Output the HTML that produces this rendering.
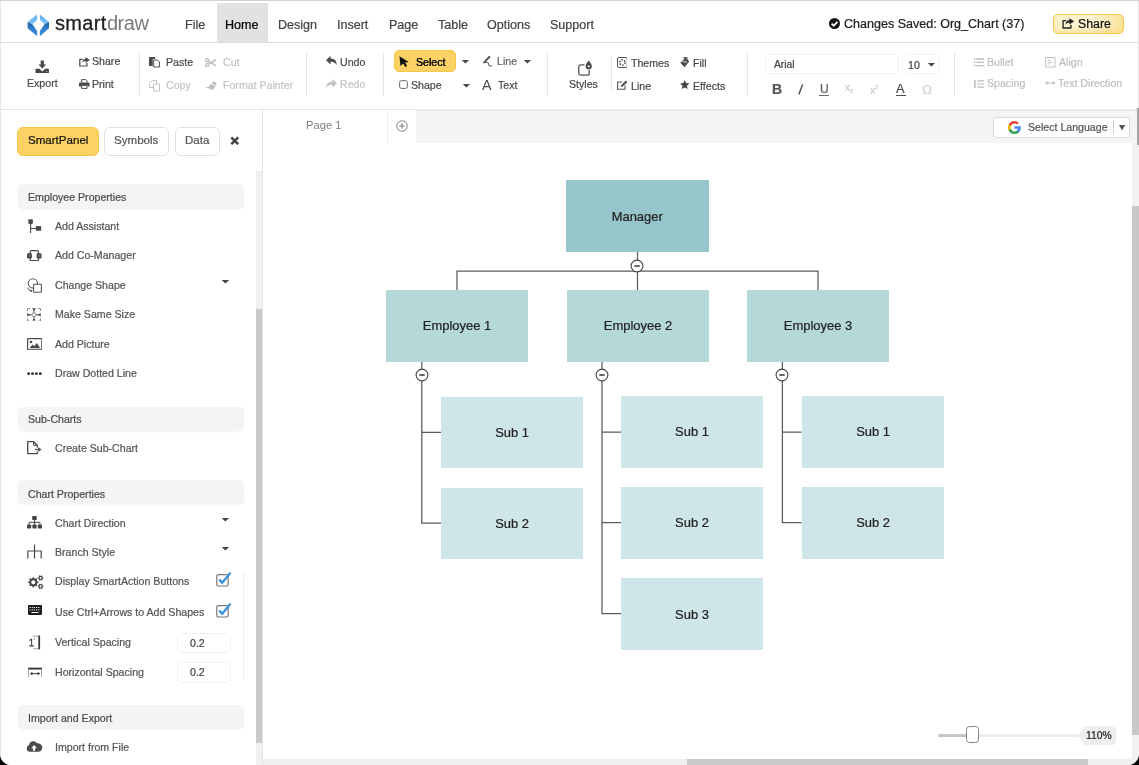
<!DOCTYPE html>
<html><head><meta charset="utf-8"><title>SmartDraw</title>
<style>
html,body{margin:0;padding:0;}
body{width:1139px;height:765px;overflow:hidden;background:#fff;position:relative;font-family:"Liberation Sans",sans-serif;}
.b{position:absolute;display:block;box-sizing:border-box;}
.t{position:absolute;white-space:nowrap;will-change:transform;-webkit-text-stroke:0.22px currentColor;}
</style></head><body>
<div class="b" style="left:0px;top:0px;width:1139px;height:765px;background:#fff;"></div>
<div class="b" style="left:0px;top:0px;width:1139px;height:1px;background:#d2d2d2;"></div>
<div class="b" style="left:0px;top:1px;width:1.2px;height:764px;background:#e6e6e6;"></div>
<div class="b" style="left:1px;top:42px;width:1138px;height:1px;background:#dcdcdc;"></div>
<div class="b" style="left:1px;top:108.8px;width:1138px;height:1.4px;background:#e3e3e3;"></div>
<div class="b" style="left:217px;top:3px;width:50.5px;height:39px;background:#e1e2e4;"></div>
<svg class="b" style="left:27px;top:13.5px;" width="23" height="23" viewBox="0 0 23 23">
<defs><linearGradient id="lgd" x1="0" y1="0" x2="0" y2="1"><stop offset="0" stop-color="#1b5a9c"/><stop offset="0.45" stop-color="#2f7dcc"/><stop offset="1" stop-color="#3f8fdd"/></linearGradient>
<linearGradient id="lgu" x1="0" y1="0" x2="0" y2="1"><stop offset="0" stop-color="#5eaef0"/><stop offset="1" stop-color="#7cc0f7"/></linearGradient></defs>
<polygon points="10.1,0.6 10.1,5.8 5.4,10.3 0.6,7.9" fill="url(#lgu)"/>
<polygon points="0.6,7.9 5.4,10.3 10.1,16.9 10.1,22.2 0.6,14.3" fill="url(#lgd)"/>
<polygon points="12.9,0.6 12.9,5.8 17.5,10.3 22,7.9" fill="url(#lgu)"/>
<polygon points="22,7.9 17.5,10.3 12.9,16.9 12.9,22.2 22,14.3" fill="url(#lgd)"/>
</svg>
<div class="t" style="left:55.3px;top:12.97px;font-size:20px;color:#222;line-height:20px;letter-spacing:0.3px;-webkit-text-stroke:0.3px #222;">smart</div>
<div class="t" style="left:107.2px;top:12.97px;font-size:20px;color:#7a7a7a;line-height:20px;letter-spacing:-0.5px;-webkit-text-stroke:0;">draw</div>
<div class="t" style="left:184.9px;top:14.75px;font-size:12.54px;color:#444;line-height:20px;">File</div>
<div class="t" style="left:224.9px;top:14.75px;font-size:12.54px;color:#000;line-height:20px;">Home</div>
<div class="t" style="left:278.0px;top:14.75px;font-size:12.54px;color:#444;line-height:20px;">Design</div>
<div class="t" style="left:336.8px;top:14.75px;font-size:12.54px;color:#444;line-height:20px;">Insert</div>
<div class="t" style="left:388.6px;top:14.75px;font-size:12.54px;color:#444;line-height:20px;">Page</div>
<div class="t" style="left:437.70000000000005px;top:14.75px;font-size:12.54px;color:#444;line-height:20px;">Table</div>
<div class="t" style="left:487.3px;top:14.75px;font-size:12.54px;color:#444;line-height:20px;">Options</div>
<div class="t" style="left:549.9px;top:14.75px;font-size:12.54px;color:#444;line-height:20px;">Support</div>
<svg class="b" style="left:829px;top:18px;" width="11" height="11" viewBox="0 0 11 11"><circle cx="5.5" cy="5.5" r="5.5" fill="#111"/><path d="M2.6 5.7 L4.7 7.7 L8.4 3.8" stroke="#fff" stroke-width="1.7" fill="none"/></svg>
<div class="t" style="left:844px;top:14.35px;font-size:12.54px;color:#222;line-height:20px;">Changes Saved: Org_Chart (37)</div>
<div class="b" style="left:1052.6px;top:14px;width:71.6px;height:19.8px;background:linear-gradient(100deg,#fdf2cb 0%,#fdf3d2 55%,#fbe39a 100%);border:1.2px solid #f7c94c;border-radius:5px;box-shadow:inset 0 -3px 4px rgba(250,215,120,0.55);"></div>
<svg class="b" style="left:1061.8px;top:17.8px;" width="12.6" height="11.6" viewBox="0 0 12 11" preserveAspectRatio="none"><path d="M8.5 6.5 V9.5 H1 V2.5 H4" stroke="#222" stroke-width="1.3" fill="none" stroke-linejoin="round"/><path d="M7 0.2 L11.5 3.2 L7 6.2 V4.3 C5 4.3 4 5.2 3.6 6.6 C3.3 3.8 4.8 2.1 7 2.1 Z" fill="#222"/></svg>
<div class="t" style="left:1077.6px;top:14.24px;font-size:12.3px;color:#111;line-height:20px;">Share</div>
<div class="b" style="left:139.0px;top:51.5px;width:1px;height:44.5px;background:#e6e6e6;"></div>
<div class="b" style="left:306.0px;top:51.5px;width:1px;height:44.5px;background:#e6e6e6;"></div>
<div class="b" style="left:382.8px;top:51.5px;width:1px;height:44.5px;background:#e6e6e6;"></div>
<div class="b" style="left:546.8px;top:51.5px;width:1px;height:44.5px;background:#e6e6e6;"></div>
<div class="b" style="left:746.8px;top:51.5px;width:1px;height:44.5px;background:#e6e6e6;"></div>
<div class="b" style="left:953.9px;top:51.5px;width:1px;height:44.5px;background:#e6e6e6;"></div>
<div class="b" style="left:610.8px;top:56px;width:1px;height:33.5px;background:#e6e6e6;"></div>
<svg class="b" style="left:35px;top:59.5px;" width="14.4" height="13.6" viewBox="0 0 14.4 13.6"><path d="M5.7 0.4 H8.9 V4.6 H11.2 L7.3 8.4 L3.4 4.6 H5.7 Z" fill="#4a4a4a"/><path d="M1.3 8.8 H4.3 L7.3 11.4 L10.3 8.8 H13.1 Q13.9 8.8 13.9 9.6 V12.4 Q13.9 13.2 13.1 13.2 H1.3 Q0.5 13.2 0.5 12.4 V9.6 Q0.5 8.8 1.3 8.8 Z" fill="#444"/><circle cx="11.6" cy="11.4" r="0.7" fill="#aaa"/></svg>
<div class="t" style="left:27.2px;top:73.23px;font-size:10.6px;color:#4a4a4a;line-height:20px;">Export</div>
<svg class="b" style="left:79px;top:56.5px;" width="11" height="10" viewBox="0 0 11 10"><path d="M8 6 V9 H0.8 V2.3 H3.6" stroke="#4a4a4a" stroke-width="1.2" fill="none" stroke-linejoin="round"/><path d="M6.5 0 L10.8 3 L6.5 6 V4.1 C4.6 4.1 3.7 5 3.3 6.3 C3 3.6 4.4 1.9 6.5 1.9 Z" fill="#4a4a4a"/></svg>
<div class="t" style="left:92px;top:51.33px;font-size:10.6px;color:#4a4a4a;line-height:20px;">Share</div>
<svg class="b" style="left:79px;top:79.2px;" width="10.6" height="10" viewBox="0 0 10.6 10"><path d="M2.6 3.4 V0.6 H6.8 L8 1.8 V3.4" fill="none" stroke="#4a4a4a" stroke-width="1"/><path d="M1.2 3.4 H9.4 Q10.6 3.4 10.6 4.6 V7.6 H8.6 V6 H2 V7.6 H0 V4.6 Q0 3.4 1.2 3.4 Z" fill="#4a4a4a"/><path d="M2.5 6.6 H8.1 V9.4 H2.5 Z" fill="#fff" stroke="#4a4a4a" stroke-width="1"/></svg>
<div class="t" style="left:92px;top:73.73px;font-size:10.6px;color:#4a4a4a;line-height:20px;">Print</div>
<svg class="b" style="left:148.6px;top:56.2px;" width="11.4" height="11.5" viewBox="0 0 12 11.5" preserveAspectRatio="none"><path d="M0 1 H6.5 V3 H4 V10 H0 Z" fill="#4a4a4a"/><path d="M5 4 H9 L11 6 V11 H5 Z" fill="#fff" stroke="#4a4a4a" stroke-width="1"/></svg>
<div class="t" style="left:165.8px;top:52.13px;font-size:10.6px;color:#4a4a4a;line-height:20px;">Paste</div>
<svg class="b" style="left:148.5px;top:80px;" width="12" height="11.5" viewBox="0 0 12 11.5"><path d="M3.5 0.5 H7.5 V7.5 H0.5 V3.5 Z" fill="none" stroke="#c4c4c4" stroke-width="1"/><path d="M4.5 4 H10.5 V11 H4.5 Z" fill="#fff" stroke="#c4c4c4" stroke-width="1"/></svg>
<div class="t" style="left:165.8px;top:75.03px;font-size:10.6px;color:#c4c4c4;line-height:20px;">Copy</div>
<svg class="b" style="left:204.8px;top:57.8px;" width="11.5" height="9.4" viewBox="0 0 11.5 9.4"><circle cx="2.1" cy="2.2" r="1.5" fill="none" stroke="#c6c6c6" stroke-width="1.5"/><circle cx="2.1" cy="7.2" r="1.5" fill="none" stroke="#c6c6c6" stroke-width="1.5"/><path d="M3.2 3.1 L11 7.8 M3.2 6.3 L11 1.6" stroke="#c6c6c6" stroke-width="1.9"/></svg>
<div class="t" style="left:222.8px;top:52.13px;font-size:10.6px;color:#c4c4c4;line-height:20px;">Cut</div>
<svg class="b" style="left:205.5px;top:80.5px;" width="11" height="9.5" viewBox="0 0 11 9.5"><path d="M0 6.6 H3" stroke="#c2c2c2" stroke-width="1"/><path d="M2.2 6.2 L5.2 2.4 L9.6 5.4 L7 8.8 L3.6 8.6 Z" fill="#c2c2c2"/><path d="M6.2 1.9 L7.6 0.3 L10.6 2.6 L9.6 4.4 Z" fill="#b4b4b4"/></svg>
<div class="t" style="left:222.8px;top:75.03px;font-size:10.6px;color:#c4c4c4;line-height:20px;">Format Painter</div>
<svg class="b" style="left:326px;top:56px;" width="11" height="10" viewBox="0 0 11 10"><path d="M4.6 0 V2.6 C8.5 2.6 10.8 4.6 10.6 9.6 C9.8 6.8 8 5.7 4.6 5.7 V8.4 L0 4.2 Z" fill="#4a4a4a"/></svg>
<div class="t" style="left:340px;top:51.73px;font-size:10.6px;color:#4a4a4a;line-height:20px;">Undo</div>
<svg class="b" style="left:326px;top:78.5px;" width="11" height="10" viewBox="0 0 11 10"><path d="M6.4 0 V2.6 C2.5 2.6 0.2 4.6 0.4 9.6 C1.2 6.8 3 5.7 6.4 5.7 V8.4 L11 4.2 Z" fill="#c4c4c4"/></svg>
<div class="t" style="left:340px;top:73.93px;font-size:10.6px;color:#c4c4c4;line-height:20px;">Redo</div>
<div class="b" style="left:394px;top:50px;width:62.3px;height:22.3px;background:#fbd263;border:1px solid #f6c64a;border-radius:5px;"></div>
<svg class="b" style="left:398.8px;top:56.1px;" width="10.6" height="11" viewBox="0 0 10 11" preserveAspectRatio="none"><path d="M0.4 0.2 L9.2 6 L5.8 6.6 L7.7 9.9 L5.9 10.9 L4.1 7.5 L1.4 9.9 Z" fill="#111"/></svg>
<div class="t" style="left:415.8px;top:52.13px;font-size:10.6px;color:#111;line-height:20px;text-shadow:0 0 0.4px #111;">Select</div>
<svg class="b" style="left:462.1px;top:60.4px;" width="7" height="4" viewBox="0 0 7 4"><path d="M0 0 H6.8 Q6.9 0.3 6.6 0.6 L3.7 3.3 Q3.4 3.5 3.1 3.3 L0.2 0.6 Q-0.1 0.3 0 0 Z" fill="#4a4a4a"/></svg>
<svg class="b" style="left:463.2px;top:84px;" width="7" height="4" viewBox="0 0 7 4"><path d="M0 0 H6.8 Q6.9 0.3 6.6 0.6 L3.7 3.3 Q3.4 3.5 3.1 3.3 L0.2 0.6 Q-0.1 0.3 0 0 Z" fill="#4a4a4a"/></svg>
<svg class="b" style="left:399px;top:80.3px;" width="9" height="9" viewBox="0 0 9 9"><rect x="0.6" y="0.6" width="7.8" height="7.8" rx="1.8" fill="none" stroke="#6a6a6a" stroke-width="1"/></svg>
<div class="t" style="left:411.4px;top:75.03px;font-size:10.6px;color:#4a4a4a;line-height:20px;">Shape</div>
<svg class="b" style="left:482.5px;top:56px;" width="10" height="11" viewBox="0 0 10 11"><path d="M6.3 1 L1.2 6.4" stroke="#555" stroke-width="2" stroke-linecap="round"/><path d="M1.2 6.4 L5.2 6.6 L6 9.9 H9" fill="none" stroke="#5a5a5a" stroke-width="1"/></svg>
<div class="t" style="left:496.8px;top:51.33px;font-size:10.6px;color:#666;line-height:20px;">Line</div>
<svg class="b" style="left:523.7px;top:60.4px;" width="7" height="4" viewBox="0 0 7 4"><path d="M0 0 H6.8 Q6.9 0.3 6.6 0.6 L3.7 3.3 Q3.4 3.5 3.1 3.3 L0.2 0.6 Q-0.1 0.3 0 0 Z" fill="#4a4a4a"/></svg>
<div class="t" style="left:481.5px;top:75.05px;font-size:14.3px;color:#4a4a4a;line-height:20px;-webkit-text-stroke:0;">A</div>
<div class="t" style="left:497.8px;top:75.03px;font-size:10.6px;color:#4a4a4a;line-height:20px;">Text</div>
<svg class="b" style="left:577.6px;top:60.2px;" width="15.5" height="16" viewBox="0 0 15.5 16"><rect x="0.8" y="4.8" width="10.4" height="10.4" rx="2" fill="none" stroke="#555" stroke-width="1.3"/><circle cx="10.7" cy="5.6" r="4.4" fill="#fff"/><path d="M10.7 0.6 C12 2.8 13.8 4.3 13.8 6.2 A3.1 3.1 0 0 1 7.6 6.2 C7.6 4.3 9.4 2.8 10.7 0.6 Z" fill="#444"/><circle cx="10.7" cy="6.3" r="1.1" fill="#fff"/></svg>
<div class="t" style="left:568.6px;top:73.63px;font-size:10.6px;color:#4a4a4a;line-height:20px;">Styles</div>
<svg class="b" style="left:616.6px;top:57px;" width="10.8" height="11" viewBox="0 0 10.8 11"><rect x="0.5" y="0.5" width="9.8" height="10" rx="1.5" fill="none" stroke="#555" stroke-width="1"/><circle cx="5.4" cy="5.5" r="2.7" fill="none" stroke="#444" stroke-width="1.5" stroke-dasharray="1.5 1.33"/></svg>
<div class="t" style="left:631.2px;top:52.53px;font-size:10.6px;color:#4a4a4a;line-height:20px;">Themes</div>
<svg class="b" style="left:680px;top:56.8px;" width="9.5" height="10.6" viewBox="0 0 9.5 10.6"><path d="M5.6 0.2 L9.2 4.6 L4.6 10.2 L0.3 5.8 L3.2 3 Z" fill="#4a4a4a"/><path d="M3.4 0.6 L7.8 1.2" stroke="#4a4a4a" stroke-width="1.2"/><path d="M2.4 4.6 L7 5.2" stroke="#fff" stroke-width="0.8"/></svg>
<div class="t" style="left:692.8px;top:52.53px;font-size:10.6px;color:#4a4a4a;line-height:20px;">Fill</div>
<svg class="b" style="left:616.5px;top:79.9px;" width="11" height="10" viewBox="0 0 11 10"><path d="M8 5.5 V9.3 H0.6 V2 H5" fill="none" stroke="#555" stroke-width="1.1"/><path d="M3.8 7 L4.3 5 L8.8 0.5 L10.4 2.1 L5.9 6.6 Z" fill="#555"/></svg>
<div class="t" style="left:631.3px;top:75.93px;font-size:10.6px;color:#4a4a4a;line-height:20px;">Line</div>
<svg class="b" style="left:679.8px;top:79.9px;" width="9.4" height="9" viewBox="0 0 10 9.5" preserveAspectRatio="none"><path d="M5 0 L6.5 3.2 L10 3.6 L7.4 6 L8.1 9.5 L5 7.8 L1.9 9.5 L2.6 6 L0 3.6 L3.5 3.2 Z" fill="#4a4a4a"/></svg>
<div class="t" style="left:692.8px;top:75.93px;font-size:10.6px;color:#4a4a4a;line-height:20px;">Effects</div>
<div class="b" style="left:765px;top:53.5px;width:134px;height:20.3px;background:#fff;border:1px solid #f4f4f4;border-radius:4px;"></div>
<div class="t" style="left:773.9px;top:54.83px;font-size:10.3px;color:#444;line-height:20px;">Arial</div>
<div class="b" style="left:901.5px;top:53.5px;width:38px;height:20.3px;background:#fff;border:1px solid #f4f4f4;border-radius:4px;"></div>
<div class="t" style="left:908px;top:54.83px;font-size:10.6px;color:#444;line-height:20px;">10</div>
<svg class="b" style="left:928px;top:62.5px;" width="7" height="4" viewBox="0 0 7 4"><path d="M0 0 H6.8 Q6.9 0.3 6.6 0.6 L3.7 3.3 Q3.4 3.5 3.1 3.3 L0.2 0.6 Q-0.1 0.3 0 0 Z" fill="#4a4a4a"/></svg>
<div class="t" style="left:771.8px;top:79.45px;font-size:14px;color:#555;line-height:20px;font-weight:bold;">B</div>
<svg class="b" style="left:797.5px;top:84px;" width="6" height="11" viewBox="0 0 6 11"><path d="M0.8 10.5 L4.6 0.5" stroke="#555" stroke-width="1.5"/></svg>
<div class="t" style="left:819.5px;top:79.24px;font-size:12px;color:#5a5a5a;line-height:20px;">U</div>
<div class="b" style="left:819.2px;top:95.2px;width:9.8px;height:1.1px;background:#6a6a6a;"></div>
<div class="t" style="left:845px;top:78.33px;font-size:10px;color:#cacaca;line-height:20px;">x<span style="font-size:5.5px;vertical-align:-1.5px">2</span></div>
<div class="t" style="left:870px;top:77.33px;font-size:10px;color:#cacaca;line-height:20px;">x<span style="font-size:5.5px;vertical-align:4.5px">2</span></div>
<div class="t" style="left:896.4px;top:78.56px;font-size:12.8px;color:#4a4a4a;line-height:20px;">A</div>
<div class="b" style="left:896.2px;top:94.9px;width:9.5px;height:1.5px;background:#4a4a4a;"></div>
<div class="t" style="left:921.5px;top:79.62px;font-size:13.5px;color:#d4d4d4;line-height:20px;">&Omega;</div>
<svg class="b" style="left:973.8px;top:58px;" width="10" height="9" viewBox="0 0 10 9"><path d="M2.4 1 H10 M2.4 4.3 H10 M2.4 7.6 H10" stroke="#bdbdbd" stroke-width="1.3"/><path d="M0 1 H1.5 M0 4.3 H1.5 M0 7.6 H1.5" stroke="#bdbdbd" stroke-width="1.5"/></svg>
<div class="t" style="left:987px;top:51.83px;font-size:10.6px;color:#bfbfbf;line-height:20px;">Bullet</div>
<svg class="b" style="left:974px;top:80px;" width="10" height="8" viewBox="0 0 10 8"><path d="M3.4 0.9 H10 M3.4 4 H10 M3.4 7.1 H10" stroke="#bdbdbd" stroke-width="1.2"/><path d="M0.9 0 V8" stroke="#b8b8b8" stroke-width="1.5"/></svg>
<div class="t" style="left:986.8px;top:73.13px;font-size:10.6px;color:#bfbfbf;line-height:20px;">Spacing</div>
<svg class="b" style="left:1045px;top:57px;" width="10.6" height="10.5" viewBox="0 0 10.6 10.5"><rect x="0.5" y="0.5" width="9.5" height="9.5" fill="none" stroke="#c4c4c4" stroke-width="1"/><path d="M2.5 3.5 H6 M2.5 5.3 H7.5 M2.5 7 H5.5" stroke="#c4c4c4" stroke-width="0.9"/></svg>
<div class="t" style="left:1058.5px;top:51.93px;font-size:10.6px;color:#bfbfbf;line-height:20px;">Align</div>
<svg class="b" style="left:1045px;top:80.3px;" width="10.6" height="6" viewBox="0 0 10.6 6"><path d="M1.5 3 H9" stroke="#bdbdbd" stroke-width="1.1"/><path d="M0 3 L2.5 1 V5 Z M10.5 3 L8 1 V5 Z" fill="#bdbdbd"/></svg>
<div class="t" style="left:1058.4px;top:73.23px;font-size:10.6px;color:#bfbfbf;line-height:20px;">Text Direction</div>
<div class="b" style="left:261.6px;top:110px;width:1.5px;height:655px;background:#e6e6e6;"></div>
<div class="b" style="left:255.5px;top:171px;width:6.5px;height:594px;background:#f0f0f0;"></div>
<div class="b" style="left:255.5px;top:308.5px;width:6.5px;height:434.5px;background:#c9c9c9;"></div>
<div class="b" style="left:17px;top:126.5px;width:81.5px;height:29.3px;background:#fbd263;border:1px solid #f6c64a;border-radius:6px;"></div>
<div class="t" style="left:27.7px;top:129.89px;font-size:11.57px;color:#111;line-height:20px;">SmartPanel</div>
<div class="b" style="left:104.3px;top:126.5px;width:64.5px;height:29.3px;background:#fff;border:1px solid #e0e0e0;border-radius:6px;"></div>
<div class="t" style="left:113.6px;top:129.89px;font-size:11.57px;color:#555;line-height:20px;">Symbols</div>
<div class="b" style="left:174.9px;top:126.5px;width:45.6px;height:29.3px;background:#fff;border:1px solid #e0e0e0;border-radius:6px;"></div>
<div class="t" style="left:185.3px;top:129.89px;font-size:11.57px;color:#555;line-height:20px;">Data</div>
<svg class="b" style="left:230px;top:135.9px;" width="9.5" height="9.5" viewBox="0 0 9.5 9.5"><path d="M1.3 1.3 L8.2 8.2 M8.2 1.3 L1.3 8.2" stroke="#444" stroke-width="2.5"/></svg>
<div class="b" style="left:17.5px;top:184px;width:226.3px;height:24.8px;background:#f3f4f6;border-radius:5px;box-shadow:0 1px 2px rgba(0,0,0,0.035);"></div>
<div class="t" style="left:27.6px;top:186.83px;font-size:10.6px;color:#4a4a4a;line-height:20px;">Employee Properties</div>
<div class="b" style="left:17.5px;top:406.6px;width:226.3px;height:24.7px;background:#f3f4f6;border-radius:5px;box-shadow:0 1px 2px rgba(0,0,0,0.035);"></div>
<div class="t" style="left:27.6px;top:409.33px;font-size:10.6px;color:#4a4a4a;line-height:20px;">Sub-Charts</div>
<div class="b" style="left:17.5px;top:480.1px;width:226.3px;height:24.3px;background:#f3f4f6;border-radius:5px;box-shadow:0 1px 2px rgba(0,0,0,0.035);"></div>
<div class="t" style="left:27.6px;top:483.53px;font-size:10.6px;color:#4a4a4a;line-height:20px;">Chart Properties</div>
<div class="b" style="left:17.5px;top:704.6px;width:226.3px;height:24.8px;background:#f3f4f6;border-radius:5px;box-shadow:0 1px 2px rgba(0,0,0,0.035);"></div>
<div class="t" style="left:27.6px;top:707.83px;font-size:10.6px;color:#4a4a4a;line-height:20px;">Import and Export</div>
<div class="t" style="left:54.6px;top:215.73px;font-size:10.6px;color:#555;line-height:20px;">Add Assistant</div>
<div class="t" style="left:54.6px;top:245.33px;font-size:10.6px;color:#555;line-height:20px;">Add Co-Manager</div>
<div class="t" style="left:54.6px;top:274.73px;font-size:10.6px;color:#555;line-height:20px;">Change Shape</div>
<div class="t" style="left:54.6px;top:304.43px;font-size:10.6px;color:#555;line-height:20px;">Make Same Size</div>
<div class="t" style="left:54.6px;top:334.03px;font-size:10.6px;color:#555;line-height:20px;">Add Picture</div>
<div class="t" style="left:54.6px;top:363.23px;font-size:10.6px;color:#555;line-height:20px;">Draw Dotted Line</div>
<div class="t" style="left:54.6px;top:437.73px;font-size:10.6px;color:#555;line-height:20px;">Create Sub-Chart</div>
<div class="t" style="left:54.6px;top:512.63px;font-size:10.6px;color:#555;line-height:20px;">Chart Direction</div>
<div class="t" style="left:54.6px;top:542.03px;font-size:10.6px;color:#555;line-height:20px;">Branch Style</div>
<div class="t" style="left:54.6px;top:601.73px;font-size:10.6px;color:#555;line-height:20px;">Use Ctrl+Arrows to Add Shapes</div>
<div class="t" style="left:54.6px;top:632.33px;font-size:10.6px;color:#555;line-height:20px;">Vertical Spacing</div>
<div class="t" style="left:54.6px;top:662.13px;font-size:10.6px;color:#555;line-height:20px;">Horizontal Spacing</div>
<div class="t" style="left:54.6px;top:737.13px;font-size:10.6px;color:#555;line-height:20px;">Import from File</div>
<div class="t" style="left:55.2px;top:571.33px;font-size:10.6px;color:#555;line-height:20px;">Display SmartAction Buttons</div>
<svg class="b" style="left:221.5px;top:280.2px;" width="7" height="4" viewBox="0 0 7 4"><path d="M0 0 H6.8 Q6.9 0.3 6.6 0.6 L3.7 3.3 Q3.4 3.5 3.1 3.3 L0.2 0.6 Q-0.1 0.3 0 0 Z" fill="#444"/></svg>
<svg class="b" style="left:221.5px;top:517.8px;" width="7" height="4" viewBox="0 0 7 4"><path d="M0 0 H6.8 Q6.9 0.3 6.6 0.6 L3.7 3.3 Q3.4 3.5 3.1 3.3 L0.2 0.6 Q-0.1 0.3 0 0 Z" fill="#444"/></svg>
<svg class="b" style="left:221.5px;top:547.2px;" width="7" height="4" viewBox="0 0 7 4"><path d="M0 0 H6.8 Q6.9 0.3 6.6 0.6 L3.7 3.3 Q3.4 3.5 3.1 3.3 L0.2 0.6 Q-0.1 0.3 0 0 Z" fill="#444"/></svg>
<svg class="b" style="left:216px;top:571.4px;" width="16" height="16" viewBox="0 0 16 16"><rect x="0.8" y="3.6" width="11.4" height="11.4" rx="1.5" fill="#fff" stroke="#777" stroke-width="1.2"/><path d="M3.2 8.5 L6.2 11.8 L14.6 1.6" fill="none" stroke="#2f8fdd" stroke-width="2.2"/></svg>
<svg class="b" style="left:216px;top:601.5px;" width="16" height="16" viewBox="0 0 16 16"><rect x="0.8" y="3.6" width="11.4" height="11.4" rx="1.5" fill="#fff" stroke="#777" stroke-width="1.2"/><path d="M3.2 8.5 L6.2 11.8 L14.6 1.6" fill="none" stroke="#2f8fdd" stroke-width="2.2"/></svg>
<div class="b" style="left:176.6px;top:632.9px;width:54.5px;height:20.6px;background:#fff;border:1px solid #f0f0f0;border-radius:5px;"></div>
<div class="t" style="left:190.1px;top:632.63px;font-size:10.6px;color:#444;line-height:20px;">0.2</div>
<div class="b" style="left:176.6px;top:662px;width:54.5px;height:20.6px;background:#fff;border:1px solid #f0f0f0;border-radius:5px;"></div>
<div class="t" style="left:190.1px;top:662.23px;font-size:10.6px;color:#444;line-height:20px;">0.2</div>
<div class="b" style="left:242.7px;top:573px;width:1px;height:106px;background:#ececec;"></div>
<svg class="b" style="left:28px;top:218.5px;" width="14" height="14.5" viewBox="0 0 14 14.5"><rect x="0.3" y="0.3" width="4.6" height="4.6" rx="0.8" fill="#4a4a4a"/><path d="M2.6 4.5 V14 M2.6 9.5 H8" stroke="#4a4a4a" stroke-width="1.1" fill="none"/><rect x="7.8" y="7" width="5.4" height="4.8" rx="0.9" fill="#4a4a4a"/></svg>
<svg class="b" style="left:27px;top:249.5px;" width="14.5" height="11.57" viewBox="0 0 14.5 11.57"><rect x="3.2" y="0.7" width="8.3" height="10" rx="1.2" fill="none" stroke="#4a4a4a" stroke-width="1.2"/><rect x="0" y="3.3" width="4.9" height="5.2" rx="1.2" fill="#4a4a4a"/><rect x="9.6" y="3.3" width="4.9" height="5.2" rx="1.2" fill="#4a4a4a"/><circle cx="2.6" cy="5.9" r="0.8" fill="#888"/><circle cx="12" cy="5.9" r="0.8" fill="#888"/></svg>
<svg class="b" style="left:27px;top:277.5px;" width="15" height="15" viewBox="0 0 15 15"><circle cx="5.9" cy="5.4" r="4.6" fill="none" stroke="#555" stroke-width="1.1"/><rect x="6.6" y="6.2" width="7.8" height="8" rx="0.4" fill="#fff" stroke="#555" stroke-width="1.1"/><path d="M0.8 9.6 C1.2 11.8 2.6 12.9 5 12.8" fill="none" stroke="#555" stroke-width="1"/><path d="M3.6 11.2 L5.6 12.8 L3.6 14.4 Z" fill="#444"/></svg>
<svg class="b" style="left:27.4px;top:307.8px;" width="14" height="13.6" viewBox="0 0 14 13.6"><path d="M0.5 3 V0.5 H3 M11 0.5 H13.5 V3 M13.5 10.6 V13.1 H11 M3 13.1 H0.5 V10.6 M0.5 5 V8.6 M13.5 5 V8.6 M5 0.5 H9 M5 13.1 H9" fill="none" stroke="#8a8a8a" stroke-width="1"/><path d="M7 1.6 V12 M1.6 6.8 H12.4" stroke="#555" stroke-width="1"/><circle cx="7" cy="1.8" r="1" fill="#444"/><circle cx="7" cy="11.8" r="1" fill="#444"/><circle cx="1.8" cy="6.8" r="1" fill="#444"/><circle cx="12.2" cy="6.8" r="1" fill="#444"/><circle cx="7" cy="6.8" r="1.9" fill="#fff" stroke="#777" stroke-width="0.8"/></svg>
<svg class="b" style="left:26.7px;top:337.5px;" width="15.5" height="12.5" viewBox="0 0 15.5 12.5"><rect x="0.6" y="0.6" width="14.3" height="11.3" rx="0.8" fill="none" stroke="#4a4a4a" stroke-width="1.2"/><circle cx="4" cy="4" r="1.3" fill="#4a4a4a"/><path d="M2.3 10.2 L5.5 6.4 L7.3 8.2 L9.8 5 L13.3 10.2 Z" fill="#4a4a4a"/></svg>
<svg class="b" style="left:27px;top:371.8px;" width="15" height="3.2" viewBox="0 0 15 3.2"><circle cx="1.6" cy="1.6" r="1.45" fill="#333"/><circle cx="5.5" cy="1.6" r="1.45" fill="#333"/><circle cx="9.4" cy="1.6" r="1.45" fill="#333"/><circle cx="13.3" cy="1.6" r="1.45" fill="#333"/></svg>
<svg class="b" style="left:27.3px;top:441px;" width="15" height="14" viewBox="0 0 15 14"><path d="M10.3 10.6 V12.6 H0.7 V0.7 H6.6 L10.3 4.3 V6.4" fill="none" stroke="#4a4a4a" stroke-width="1.3" stroke-linejoin="round"/><path d="M6.6 0.9 V4.3 H10.2" fill="none" stroke="#4a4a4a" stroke-width="1"/><path d="M8 8.5 H12" stroke="#4a4a4a" stroke-width="1.3"/><path d="M11.3 6.1 L14.5 8.5 L11.3 10.9 Z" fill="#4a4a4a"/></svg>
<svg class="b" style="left:27.3px;top:516px;" width="15" height="12.5" viewBox="0 0 15 12.5"><rect x="5.2" y="0" width="4.6" height="4" rx="0.7" fill="#444"/><rect x="0" y="8.5" width="4.2" height="4" rx="0.7" fill="#444"/><rect x="5.4" y="8.5" width="4.2" height="4" rx="0.7" fill="#444"/><rect x="10.8" y="8.5" width="4.2" height="4" rx="0.7" fill="#444"/><path d="M7.5 4 V8.5 M2.1 8.5 V6.3 H12.9 V8.5" fill="none" stroke="#444" stroke-width="1"/></svg>
<svg class="b" style="left:27.3px;top:544px;" width="15" height="15" viewBox="0 0 15 15"><path d="M7.5 0.5 V14.5 M0.8 14.5 V7 H14.2 V14.5" fill="none" stroke="#4a4a4a" stroke-width="1.2"/></svg>
<svg class="b" style="left:27.5px;top:574.5px;" width="16" height="15" viewBox="0 0 16 15"><path d="M10.47 6.79 L10.47 7.81 L9.03 8.43 L8.74 9.14 L9.32 10.60 L8.60 11.32 L7.14 10.74 L6.43 11.03 L5.81 12.47 L4.79 12.47 L4.17 11.03 L3.46 10.74 L2.00 11.32 L1.28 10.60 L1.86 9.14 L1.57 8.43 L0.13 7.81 L0.13 6.79 L1.57 6.17 L1.86 5.46 L1.28 4.00 L2.00 3.28 L3.46 3.86 L4.17 3.57 L4.79 2.13 L5.81 2.13 L6.43 3.57 L7.14 3.86 L8.60 3.28 L9.32 4.00 L8.74 5.46 L9.03 6.17 Z M7.40 7.30 A2.1 2.1 0 1 0 3.20 7.30 A2.1 2.1 0 1 0 7.40 7.30 Z" fill="#444" fill-rule="evenodd"/><path d="M15.48 2.62 L15.48 3.38 L14.54 3.80 L14.27 4.28 L14.37 5.30 L13.71 5.68 L12.87 5.08 L12.33 5.08 L11.49 5.68 L10.83 5.30 L10.93 4.28 L10.66 3.80 L9.72 3.38 L9.72 2.62 L10.66 2.20 L10.93 1.72 L10.83 0.70 L11.49 0.32 L12.33 0.92 L12.87 0.92 L13.71 0.32 L14.37 0.70 L14.27 1.72 L14.54 2.20 Z M13.65 3.00 A1.05 1.05 0 1 0 11.55 3.00 A1.05 1.05 0 1 0 13.65 3.00 Z" fill="#444" fill-rule="evenodd"/><path d="M15.48 11.02 L15.48 11.78 L14.54 12.20 L14.27 12.68 L14.37 13.70 L13.71 14.08 L12.87 13.48 L12.33 13.48 L11.49 14.08 L10.83 13.70 L10.93 12.68 L10.66 12.20 L9.72 11.78 L9.72 11.02 L10.66 10.60 L10.93 10.12 L10.83 9.10 L11.49 8.72 L12.33 9.32 L12.87 9.32 L13.71 8.72 L14.37 9.10 L14.27 10.12 L14.54 10.60 Z M13.65 11.40 A1.05 1.05 0 1 0 11.55 11.40 A1.05 1.05 0 1 0 13.65 11.40 Z" fill="#444" fill-rule="evenodd"/></svg>
<svg class="b" style="left:28px;top:605.3px;" width="14" height="10" viewBox="0 0 14 10"><rect x="0" y="0" width="14" height="10" rx="1" fill="#1e1e1e"/><path d="M1.6 2.5 H12.4 M1.6 4.9 H12.4" stroke="#fff" stroke-width="1" stroke-dasharray="1.2 0.95"/><path d="M3.4 7.5 H10.6" stroke="#fff" stroke-width="1"/></svg>
<svg class="b" style="left:28px;top:635px;" width="14" height="15" viewBox="0 0 14 15"><path d="M5 1.2 H11.5 M5 13.8 H11.5" stroke="#999" stroke-width="0.9"/><path d="M11.2 0.6 V14.2" stroke="#3a3a3a" stroke-width="1.8"/><path d="M1.4 5.4 L3.6 4.2 V10.9 M1.3 10.9 H5.8" fill="none" stroke="#444" stroke-width="1.1"/><circle cx="6.3" cy="4" r="0.6" fill="#555"/></svg>
<svg class="b" style="left:28px;top:667px;" width="14" height="10.6" viewBox="0 0 14 10.6"><path d="M0 1.6 H14" stroke="#3a3a3a" stroke-width="1.9"/><path d="M0.5 2 V10 M13.5 2 V10" stroke="#999" stroke-width="0.9"/><path d="M3.5 6.6 H10.5" stroke="#444" stroke-width="1.1"/><path d="M1.8 6.6 L4.4 4.8 V8.4 Z M12.2 6.6 L9.6 4.8 V8.4 Z" fill="#444"/></svg>
<svg class="b" style="left:26.4px;top:740.4px;" width="16.2" height="12" viewBox="0 0 15.5 11.6" preserveAspectRatio="none"><path d="M3.7 11.4 A3.4 3.4 0 0 1 3 4.8 A4.1 4.1 0 0 1 10.6 3.2 A3.6 3.6 0 0 1 12.2 11.4 Z" fill="#4a4a4a"/><path d="M7.7 4.9 L10.5 8 H8.7 V10.3 H6.7 V8 H4.9 Z" fill="#fff"/></svg>
<div class="b" style="left:416px;top:110.2px;width:721px;height:32.6px;background:#f3f4f6;"></div>
<div class="b" style="left:416px;top:108.5px;width:721px;height:2.6px;background:#e9e9e9;"></div>
<div class="b" style="left:387px;top:110.5px;width:1px;height:32.5px;background:#ebebeb;"></div>
<div class="t" style="left:306.2px;top:114.72px;font-size:11.2px;color:#808080;line-height:20px;-webkit-text-stroke:0;">Page 1</div>
<svg class="b" style="left:395.5px;top:120px;" width="12" height="12" viewBox="0 0 12 12"><circle cx="6" cy="6" r="5.2" fill="none" stroke="#777" stroke-width="0.9"/><path d="M3.3 6 H8.7 M6 3.3 V8.7" stroke="#777" stroke-width="1"/></svg>
<div class="b" style="left:992.6px;top:116.9px;width:137px;height:20.7px;background:#fff;border:1px solid #d8d8d8;border-radius:4px;"></div>
<svg class="b" style="left:1008px;top:121px;" width="13" height="13" viewBox="0 0 13 13"><path d="M12.7 6.65c0-.45-.04-.88-.11-1.3H6.5v2.46h3.48a2.97 2.97 0 0 1-1.29 1.95v1.62h2.09c1.22-1.13 1.92-2.78 1.92-4.73z" fill="#4285f4"/>
<path d="M6.5 13c1.75 0 3.22-.58 4.29-1.57L8.7 9.81c-.58.39-1.32.62-2.2.62-1.69 0-3.12-1.14-3.63-2.68H.71v1.67A6.5 6.5 0 0 0 6.5 13z" fill="#34a853"/>
<path d="M2.87 7.75a3.9 3.9 0 0 1 0-2.5V3.58H.71a6.5 6.5 0 0 0 0 5.84l2.16-1.67z" fill="#fbbc05"/>
<path d="M6.5 2.57c.95 0 1.81.33 2.48.97l1.86-1.86A6.23 6.23 0 0 0 6.5 0 6.5 6.5 0 0 0 .71 3.58l2.16 1.67C3.38 3.71 4.81 2.57 6.5 2.57z" fill="#ea4335"/></svg>
<div class="t" style="left:1028.4px;top:117.33px;font-size:10.6px;color:#555;line-height:20px;">Select Language</div>
<div class="b" style="left:1112.7px;top:121px;width:1px;height:13px;background:#cfcfcf;"></div>
<svg class="b" style="left:1119px;top:125.4px;" width="6.2" height="5.4" viewBox="0 0 6.2 5.4"><path d="M0 0 H6.2 L3.1 5.4 Z" fill="#555"/></svg>
<div class="b" style="left:1132px;top:143px;width:7px;height:615.5px;background:#f2f2f2;"></div>
<div class="b" style="left:1132px;top:206px;width:7px;height:529px;background:#c8c8c8;"></div>
<div class="b" style="left:1137.2px;top:107.5px;width:1.8px;height:37px;background:#a2a2a2;"></div>
<div class="b" style="left:1137.5px;top:1px;width:1.5px;height:107px;background:#e6e6e6;"></div>
<div class="b" style="left:263px;top:758.5px;width:869px;height:6.5px;background:#efefef;"></div>
<div class="b" style="left:687px;top:758.5px;width:400.5px;height:6.5px;background:#c9c9c9;"></div>
<div class="b" style="left:1132px;top:758.5px;width:7px;height:6.5px;background:#f4f4f4;border-radius:0 0 9px 0;"></div>
<div class="b" style="left:937.5px;top:733.5px;width:141px;height:3.4px;background:#ececec;border-radius:1.7px;"></div>
<div class="b" style="left:937.5px;top:733.5px;width:30px;height:3.4px;background:#c6c6c6;border-radius:1.7px;"></div>
<div class="b" style="left:965.5px;top:726.3px;width:13.2px;height:16.6px;background:#fff;border:1.4px solid #828282;border-radius:3.5px;"></div>
<svg class="b" style="left:1078px;top:725.5px;" width="38.5" height="19.5" viewBox="0 0 38.5 19.5"><path d="M0.3 9.7 Q0.3 9 1 8 L4 3 Q6 0 9.5 0 H32 Q38.5 0 38.5 6.5 V13 Q38.5 19.5 32 19.5 H9.5 Q6 19.5 4 16.5 L1 11.4 Q0.3 10.4 0.3 9.7 Z" fill="#eeeeee"/></svg>
<div class="t" style="left:1086.3px;top:725.63px;font-size:10.3px;color:#222;line-height:20px;">110%</div>
<svg class="b" style="left:0px;top:0px;" width="1139" height="765" viewBox="0 0 1139 765"><g fill="none" stroke="#5a5a5a" stroke-width="1.25">
<path d="M637.5 252 V290 M457 290 V271 H818 V290" />
<path d="M421.8 362 V523 H441 M421.8 432.4 H441" />
<path d="M602 362 V613.5 H621 M602 432 H621 M602 522.6 H621" />
<path d="M782.4 362 V522.6 H801.5 M782.4 432 H801.5" />
</g></svg>
<div class="b" style="left:566.3px;top:180.3px;width:142.4px;height:71.9px;background:#96c5cc;"></div>
<div class="t" style="left:566.3px;top:206.76px;font-size:12.95px;color:#222;line-height:20px;width:142.4px;text-align:center;">Manager</div>
<div class="b" style="left:386.3px;top:289.8px;width:142px;height:71.8px;background:#b5d8d9;"></div>
<div class="t" style="left:386.3px;top:316.21px;font-size:12.95px;color:#222;line-height:20px;width:142px;text-align:center;">Employee 1</div>
<div class="b" style="left:566.5px;top:289.8px;width:142px;height:71.8px;background:#b5d8d9;"></div>
<div class="t" style="left:566.5px;top:316.21px;font-size:12.95px;color:#222;line-height:20px;width:142px;text-align:center;">Employee 2</div>
<div class="b" style="left:746.8px;top:289.8px;width:142px;height:71.8px;background:#b5d8d9;"></div>
<div class="t" style="left:746.8px;top:316.21px;font-size:12.95px;color:#222;line-height:20px;width:142px;text-align:center;">Employee 3</div>
<div class="b" style="left:440.6px;top:396.6px;width:142.2px;height:71.7px;background:#cfe6e9;"></div>
<div class="t" style="left:440.6px;top:422.96px;font-size:12.95px;color:#222;line-height:20px;width:142.2px;text-align:center;">Sub 1</div>
<div class="b" style="left:440.6px;top:487.7px;width:142.2px;height:71.7px;background:#cfe6e9;"></div>
<div class="t" style="left:440.6px;top:514.06px;font-size:12.95px;color:#222;line-height:20px;width:142.2px;text-align:center;">Sub 2</div>
<div class="b" style="left:621.2px;top:396.1px;width:142px;height:71.5px;background:#cfe6e9;"></div>
<div class="t" style="left:621.2px;top:422.36px;font-size:12.95px;color:#222;line-height:20px;width:142px;text-align:center;">Sub 1</div>
<div class="b" style="left:621.2px;top:487px;width:142px;height:71.8px;background:#cfe6e9;"></div>
<div class="t" style="left:621.2px;top:513.41px;font-size:12.95px;color:#222;line-height:20px;width:142px;text-align:center;">Sub 2</div>
<div class="b" style="left:621.2px;top:578.4px;width:142px;height:71.5px;background:#cfe6e9;"></div>
<div class="t" style="left:621.2px;top:604.66px;font-size:12.95px;color:#222;line-height:20px;width:142px;text-align:center;">Sub 3</div>
<div class="b" style="left:801.6px;top:396.1px;width:142.3px;height:71.5px;background:#cfe6e9;"></div>
<div class="t" style="left:801.6px;top:422.36px;font-size:12.95px;color:#222;line-height:20px;width:142.3px;text-align:center;">Sub 1</div>
<div class="b" style="left:801.6px;top:487px;width:142.3px;height:71.8px;background:#cfe6e9;"></div>
<div class="t" style="left:801.6px;top:513.41px;font-size:12.95px;color:#222;line-height:20px;width:142.3px;text-align:center;">Sub 2</div>
<svg class="b" style="left:630.4px;top:258.6px;" width="14" height="14" viewBox="0 0 14 14"><circle cx="7" cy="7" r="5.9" fill="#fff" stroke="#444" stroke-width="1.1"/><path d="M4.3 7 H9.7" stroke="#333" stroke-width="1.5"/></svg>
<svg class="b" style="left:414.8px;top:367.8px;" width="14" height="14" viewBox="0 0 14 14"><circle cx="7" cy="7" r="5.9" fill="#fff" stroke="#444" stroke-width="1.1"/><path d="M4.3 7 H9.7" stroke="#333" stroke-width="1.5"/></svg>
<svg class="b" style="left:595px;top:367.8px;" width="14" height="14" viewBox="0 0 14 14"><circle cx="7" cy="7" r="5.9" fill="#fff" stroke="#444" stroke-width="1.1"/><path d="M4.3 7 H9.7" stroke="#333" stroke-width="1.5"/></svg>
<svg class="b" style="left:775.4px;top:367.8px;" width="14" height="14" viewBox="0 0 14 14"><circle cx="7" cy="7" r="5.9" fill="#fff" stroke="#444" stroke-width="1.1"/><path d="M4.3 7 H9.7" stroke="#333" stroke-width="1.5"/></svg>
<svg class="b" style="left:0px;top:753px;" width="12" height="12" viewBox="0 0 12 12"><path d="M0 0 V12 H12 A11 11 0 0 1 0 0 Z" fill="#000"/></svg>
<svg class="b" style="left:1127px;top:753px;" width="12" height="12" viewBox="0 0 12 12"><path d="M12 0 V12 H0 A11 11 0 0 0 12 0 Z" fill="#000"/></svg>
</body></html>
